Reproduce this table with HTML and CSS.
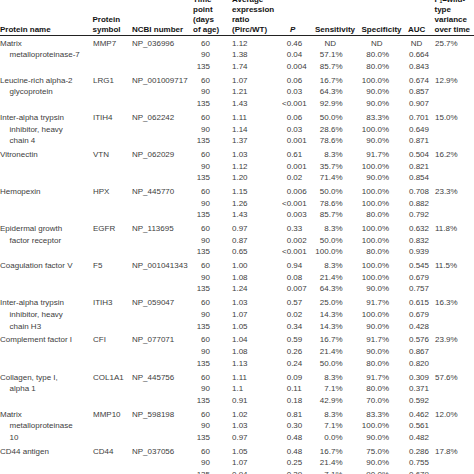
FILE: index.html
```html
<!DOCTYPE html>
<html>
<head>
<meta charset="utf-8">
<link rel="stylesheet" href="styles.css">
</head>
<body>
<div class="tbl">
  <div class="cols head">
    <div>Protein name</div>
    <div>Protein<br>symbol</div>
    <div>NCBI number</div>
    <div>Time<br>point<br>(days<br>of age)</div>
    <div>Average<br>expression<br>ratio<br>(Pirc/WT)</div>
    <div class="hp"><i>P</i></div>
    <div>Sensitivity</div>
    <div>Specificity</div>
    <div>AUC</div>
    <div>F<sub>1</sub>=wild-<br>type<br>variance<br>over time</div>
  </div>

  <div class="cols group">
    <div class="name"><span>Matrix</span><span class="c">metalloproteinase-7</span></div>
    <div class="sym">MMP7</div><div class="ncbi">NP_036996</div>
    <div class="tp">60</div><div class="avg">1.12</div><div class="p">0.46</div><div class="sens nd">ND</div><div class="spec nd">ND</div><div class="auc nd">ND</div><div class="f1">25.7%</div>
    <div class="tp">90</div><div class="avg">1.38</div><div class="p">0.04</div><div class="sens">57.1%</div><div class="spec">80.0%</div><div class="auc">0.664</div>
    <div class="tp">135</div><div class="avg">1.74</div><div class="p">0.004</div><div class="sens">85.7%</div><div class="spec">80.0%</div><div class="auc">0.843</div>
  </div>

  <div class="cols group">
    <div class="name"><span>Leucine-rich alpha-2</span><span class="c">glycoprotein</span></div>
    <div class="sym">LRG1</div><div class="ncbi">NP_001009717</div>
    <div class="tp">60</div><div class="avg">1.07</div><div class="p">0.06</div><div class="sens">16.7%</div><div class="spec">100.0%</div><div class="auc">0.674</div><div class="f1">12.9%</div>
    <div class="tp">90</div><div class="avg">1.21</div><div class="p">0.03</div><div class="sens">64.3%</div><div class="spec">90.0%</div><div class="auc">0.857</div>
    <div class="tp">135</div><div class="avg">1.43</div><div class="p"><span class="lt">&lt;</span>0.001</div><div class="sens">92.9%</div><div class="spec">90.0%</div><div class="auc">0.907</div>
  </div>

  <div class="cols group">
    <div class="name"><span>Inter-alpha trypsin</span><span class="c">inhibitor, heavy</span><span class="c">chain 4</span></div>
    <div class="sym">ITIH4</div><div class="ncbi">NP_062242</div>
    <div class="tp">60</div><div class="avg">1.11</div><div class="p">0.06</div><div class="sens">50.0%</div><div class="spec">83.3%</div><div class="auc">0.701</div><div class="f1">15.0%</div>
    <div class="tp">90</div><div class="avg">1.14</div><div class="p">0.03</div><div class="sens">28.6%</div><div class="spec">100.0%</div><div class="auc">0.649</div>
    <div class="tp">135</div><div class="avg">1.37</div><div class="p">0.001</div><div class="sens">78.6%</div><div class="spec">90.0%</div><div class="auc">0.871</div>
  </div>

  <div class="cols group">
    <div class="name"><span>Vitronectin</span></div>
    <div class="sym">VTN</div><div class="ncbi">NP_062029</div>
    <div class="tp">60</div><div class="avg">1.03</div><div class="p">0.61</div><div class="sens">8.3%</div><div class="spec">91.7%</div><div class="auc">0.504</div><div class="f1">16.2%</div>
    <div class="tp">90</div><div class="avg">1.12</div><div class="p">0.001</div><div class="sens">35.7%</div><div class="spec">100.0%</div><div class="auc">0.821</div>
    <div class="tp">135</div><div class="avg">1.20</div><div class="p">0.02</div><div class="sens">71.4%</div><div class="spec">90.0%</div><div class="auc">0.854</div>
  </div>

  <div class="cols group">
    <div class="name"><span>Hemopexin</span></div>
    <div class="sym">HPX</div><div class="ncbi">NP_445770</div>
    <div class="tp">60</div><div class="avg">1.15</div><div class="p">0.006</div><div class="sens">50.0%</div><div class="spec">100.0%</div><div class="auc">0.708</div><div class="f1">23.3%</div>
    <div class="tp">90</div><div class="avg">1.26</div><div class="p"><span class="lt">&lt;</span>0.001</div><div class="sens">78.6%</div><div class="spec">100.0%</div><div class="auc">0.882</div>
    <div class="tp">135</div><div class="avg">1.43</div><div class="p">0.003</div><div class="sens">85.7%</div><div class="spec">80.0%</div><div class="auc">0.792</div>
  </div>

  <div class="cols group">
    <div class="name"><span>Epidermal growth</span><span class="c">factor receptor</span></div>
    <div class="sym">EGFR</div><div class="ncbi">NP_113695</div>
    <div class="tp">60</div><div class="avg">0.97</div><div class="p">0.33</div><div class="sens">8.3%</div><div class="spec">100.0%</div><div class="auc">0.632</div><div class="f1">11.8%</div>
    <div class="tp">90</div><div class="avg">0.87</div><div class="p">0.002</div><div class="sens">50.0%</div><div class="spec">100.0%</div><div class="auc">0.832</div>
    <div class="tp">135</div><div class="avg">0.65</div><div class="p"><span class="lt">&lt;</span>0.001</div><div class="sens">100.0%</div><div class="spec">80.0%</div><div class="auc">0.939</div>
  </div>

  <div class="cols group">
    <div class="name"><span>Coagulation factor V</span></div>
    <div class="sym">F5</div><div class="ncbi">NP_001041343</div>
    <div class="tp">60</div><div class="avg">1.00</div><div class="p">0.94</div><div class="sens">8.3%</div><div class="spec">100.0%</div><div class="auc">0.545</div><div class="f1">11.5%</div>
    <div class="tp">90</div><div class="avg">1.08</div><div class="p">0.08</div><div class="sens">21.4%</div><div class="spec">100.0%</div><div class="auc">0.679</div>
    <div class="tp">135</div><div class="avg">1.24</div><div class="p">0.007</div><div class="sens">64.3%</div><div class="spec">90.0%</div><div class="auc">0.757</div>
  </div>

  <div class="cols group">
    <div class="name"><span>Inter-alpha trypsin</span><span class="c">inhibitor, heavy</span><span class="c">chain H3</span></div>
    <div class="sym">ITIH3</div><div class="ncbi">NP_059047</div>
    <div class="tp">60</div><div class="avg">1.03</div><div class="p">0.57</div><div class="sens">25.0%</div><div class="spec">91.7%</div><div class="auc">0.615</div><div class="f1">16.3%</div>
    <div class="tp">90</div><div class="avg">1.07</div><div class="p">0.02</div><div class="sens">14.3%</div><div class="spec">100.0%</div><div class="auc">0.679</div>
    <div class="tp">135</div><div class="avg">1.05</div><div class="p">0.34</div><div class="sens">14.3%</div><div class="spec">90.0%</div><div class="auc">0.428</div>
  </div>

  <div class="cols group">
    <div class="name"><span>Complement factor I</span></div>
    <div class="sym">CFI</div><div class="ncbi">NP_077071</div>
    <div class="tp">60</div><div class="avg">1.04</div><div class="p">0.59</div><div class="sens">16.7%</div><div class="spec">91.7%</div><div class="auc">0.576</div><div class="f1">23.9%</div>
    <div class="tp">90</div><div class="avg">1.08</div><div class="p">0.26</div><div class="sens">21.4%</div><div class="spec">90.0%</div><div class="auc">0.867</div>
    <div class="tp">135</div><div class="avg">1.13</div><div class="p">0.24</div><div class="sens">50.0%</div><div class="spec">80.0%</div><div class="auc">0.820</div>
  </div>

  <div class="cols group">
    <div class="name"><span>Collagen, type I,</span><span class="c">alpha 1</span></div>
    <div class="sym">COL1A1</div><div class="ncbi">NP_445756</div>
    <div class="tp">60</div><div class="avg">1.11</div><div class="p">0.09</div><div class="sens">8.3%</div><div class="spec">91.7%</div><div class="auc">0.309</div><div class="f1">57.6%</div>
    <div class="tp">90</div><div class="avg">1.1</div><div class="p">0.11</div><div class="sens">7.1%</div><div class="spec">80.0%</div><div class="auc">0.371</div>
    <div class="tp">135</div><div class="avg">0.91</div><div class="p">0.18</div><div class="sens">42.9%</div><div class="spec">70.0%</div><div class="auc">0.592</div>
  </div>

  <div class="cols group">
    <div class="name"><span>Matrix</span><span class="c">metalloproteinase</span><span class="c">10</span></div>
    <div class="sym">MMP10</div><div class="ncbi">NP_598198</div>
    <div class="tp">60</div><div class="avg">1.02</div><div class="p">0.81</div><div class="sens">8.3%</div><div class="spec">83.3%</div><div class="auc">0.462</div><div class="f1">12.0%</div>
    <div class="tp">90</div><div class="avg">1.03</div><div class="p">0.30</div><div class="sens">7.1%</div><div class="spec">100.0%</div><div class="auc">0.561</div>
    <div class="tp">135</div><div class="avg">0.97</div><div class="p">0.48</div><div class="sens">0.0%</div><div class="spec">90.0%</div><div class="auc">0.482</div>
  </div>

  <div class="cols group">
    <div class="name"><span>CD44 antigen</span></div>
    <div class="sym">CD44</div><div class="ncbi">NP_037056</div>
    <div class="tp">60</div><div class="avg">1.05</div><div class="p">0.48</div><div class="sens">16.7%</div><div class="spec">75.0%</div><div class="auc">0.286</div><div class="f1">17.8%</div>
    <div class="tp">90</div><div class="avg">1.07</div><div class="p">0.25</div><div class="sens">21.4%</div><div class="spec">90.0%</div><div class="auc">0.755</div>
    <div class="tp">135</div><div class="avg">0.94</div><div class="p">0.39</div><div class="sens">7.1%</div><div class="spec">90.0%</div><div class="auc">0.679</div>
  </div>
</div>
</body>
</html>
```

FILE: styles.css
```css
html, body {
  margin: 0;
  padding: 0;
  background: #ffffff;
}

body {
  width: 474px;
  height: 474px;
  overflow: hidden;
  font-family: "Liberation Sans", Arial, sans-serif;
  font-size: 8px;
  color: #404040;
}

.tbl {
  width: 474px;
  margin-top: -5.5px;
}

.cols {
  display: grid;
  grid-template-columns: 92.5px 39.5px 61px 39px 54.5px 28.5px 46.5px 46.5px 26.5px 39.5px;
}

.head {
  align-items: end;
  font-weight: bold;
  color: #141414;
  line-height: 10px;
  border-bottom: 1px solid #222222;
}

.head > div {
  white-space: nowrap;
}

.head sub {
  font-size: 5px;
  line-height: 0;
  vertical-align: -1px;
}

.hp {
  padding-left: 3.5px;
}

.group {
  grid-template-rows: repeat(3, 11.6px);
  padding-top: 2.3px;
  line-height: 11.6px;
  white-space: nowrap;
}

.name {
  grid-column: 1;
  grid-row: 1 / span 3;
}

.name span {
  display: block;
}

.name .c {
  padding-left: 9.5px;
}

.sym { grid-column: 2; padding-left: 0.5px; }
.ncbi { grid-column: 3; }
.tp { grid-column: 4; text-align: right; padding-right: 22px; }
.avg { grid-column: 5; }
.p { grid-column: 6; padding-left: 0.2px; }
.sens { grid-column: 7; text-align: right; padding-right: 19px; }
.spec { grid-column: 8; text-align: right; padding-right: 19px; }
.auc { grid-column: 9; padding-left: 1px; }
.f1 { grid-column: 10; padding-left: 0.5px; }

.sens.nd, .spec.nd {
  padding-right: 25.5px;
}

.auc.nd {
  padding-left: 2.7px;
}

.lt {
  margin-left: -4.7px;
}
```
